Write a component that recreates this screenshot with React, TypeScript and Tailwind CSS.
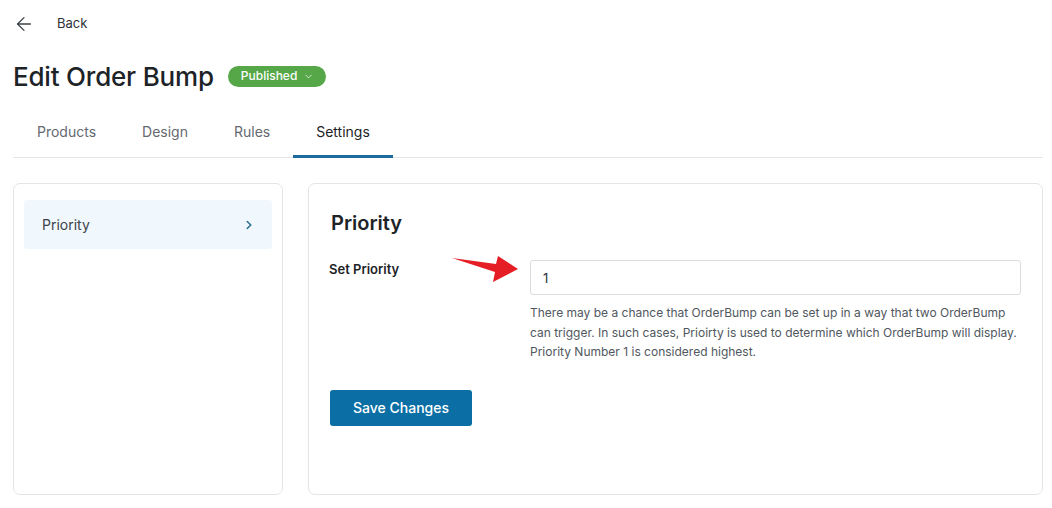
import React from "react";
import { ArrowLeft, ChevronDown, ChevronRight } from "lucide-react";

const tabs = ["Products", "Design", "Rules", "Settings"];

const App = () => {
  const active = "Settings";

  return (
    <div
      className="min-h-screen w-full bg-white pl-[13px] pr-[9px] text-[#1d2327]"
      style={{ fontFamily: "Inter, 'Noto Sans', Arial, sans-serif" }}
    >
      <div className="flex h-[48px] items-center">
        <ArrowLeft className="h-[22px] w-[22px] text-[#3c434a]" strokeWidth={1.4} />
        <span className="ml-[22px] text-[13px] text-[#2c3338]">Back</span>
      </div>

      <div className="flex h-[56px] items-center">
        <h1 className="text-[26px] font-medium tracking-[-0.2px] text-[#1d2327]">
          Edit Order Bump
        </h1>
        <button className="ml-[14px] flex h-[21px] items-center gap-[6px] rounded-full bg-[#55a747] pl-[13px] pr-[12px] text-[12px] font-medium text-white">
          Published
          <ChevronDown className="h-[11px] w-[11px]" strokeWidth={1.6} />
        </button>
      </div>

      <div className="mt-[1px] flex h-[53px] border-b border-[#e2e4e7]">
        {tabs.map((tab) => (
          <div
            key={tab}
            className={
              tab === active
                ? "-mb-px flex items-center border-b-[3px] border-[#1b6c9e] px-[23px] pt-[3px] text-[14px] text-[#1d2327]"
                : "flex items-center px-[23px] text-[14px] text-[#646970] first:pl-[24px]"
            }
          >
            {tab}
          </div>
        ))}
      </div>

      <div className="mt-[25px] flex gap-[25px]">
        <aside className="h-[312px] w-[270px] shrink-0 rounded-[7px] border border-[#e3e5e8] px-[10px] pt-[16px]">
          <div className="flex h-[49px] items-center justify-between rounded-[3px] bg-[#f0f8fd] pl-[18px] pr-[16px]">
            <span className="text-[14px] text-[#3c434a]">Priority</span>
            <ChevronRight className="h-[14px] w-[14px] text-[#2a6f97]" strokeWidth={2.6} />
          </div>
        </aside>

        <section className="h-[312px] flex-1 rounded-[7px] border border-[#e3e5e8] pl-[20px] pr-[21px] pt-[24px]">
          <h2 className="pl-[2px] text-[20px] font-semibold text-[#1d2327]">Priority</h2>

          <div className="mt-[22px] flex">
            <label className="w-[201px] shrink-0 text-[13px] font-semibold text-[#1d2327]">
              Set Priority
            </label>
            <div className="relative flex-1">
              <svg
                className="absolute left-[-78px] top-[-4px]"
                width="68"
                height="28"
                viewBox="0 0 68 28"
              >
                <polygon
                  points="0,2 44,8 46,0 66,13 41,26 43,16"
                  fill="#e51e25"
                />
              </svg>
              <input
                defaultValue="1"
                className="h-[35px] w-full rounded-[3px] border border-[#dcdcde] px-[12px] text-[13px] text-[#2c3338] outline-none"
              />
              <p className="mt-[8px] pr-[4px] text-[12px] leading-[19.5px] text-[#50575e]">
                There may be a chance that OrderBump can be set up in a way that two OrderBump
                can trigger. In such cases, Prioirty is used to determine which OrderBump will
                display. Priority Number 1 is considered highest.
              </p>
            </div>
          </div>

          <button className="ml-[1px] mt-[28px] h-[36px] w-[142px] rounded-[3px] bg-[#0b6fa6] text-[14px] font-medium text-white">
            Save Changes
          </button>
        </section>
      </div>
    </div>
  );
};

export default App;
